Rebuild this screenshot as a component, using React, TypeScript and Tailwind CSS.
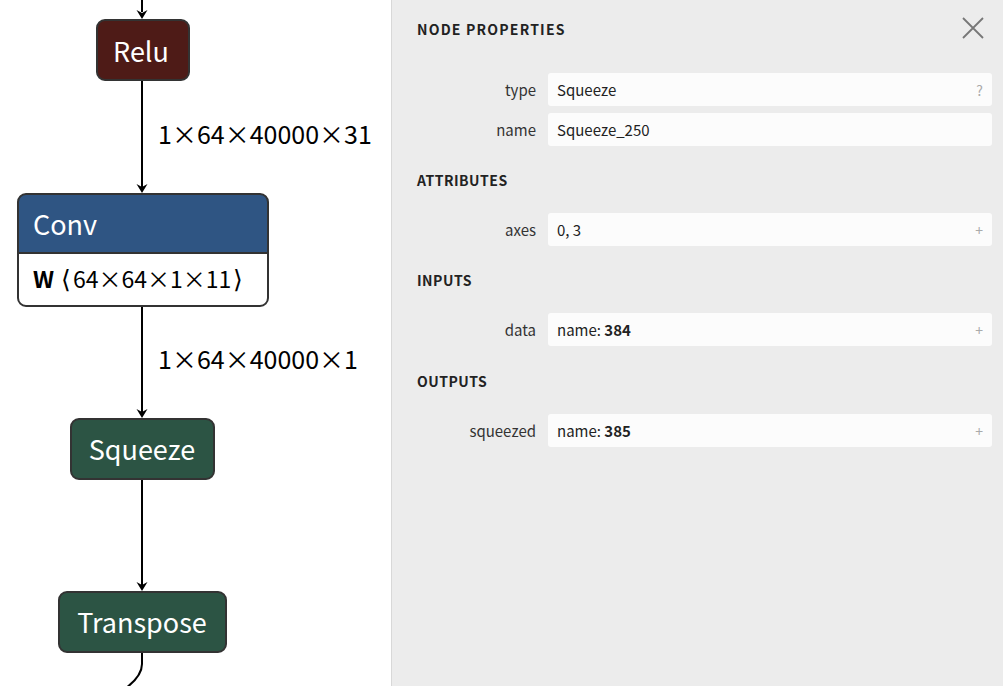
import React from 'react';

const FONT = '"Noto Sans CJK JP", "Open Sans", sans-serif';

const Arrow: React.FC<{ x: number; y: number }> = ({ x, y }) => (
  <path d={`M ${x} ${y} L ${x - 5.5} ${y - 9} L ${x} ${y - 6} L ${x + 5.5} ${y - 9} Z`} fill="#000" />
);

const Graph: React.FC = () => (
  <svg width="391" height="686" viewBox="0 0 391 686" className="block" style={{ fontFamily: FONT }}>
    {/* edges */}
    <g stroke="#000" strokeWidth="2" fill="none">
      <line x1="142" y1="-2" x2="142" y2="12" />
      <line x1="142" y1="80" x2="142" y2="187" />
      <line x1="142" y1="306" x2="142" y2="412" />
      <line x1="142" y1="479" x2="142" y2="585" />
      <path d="M 142 652 L 142 664 Q 142 676 126 688" />
    </g>
    <Arrow x={142} y={19} />
    <Arrow x={142} y={193} />
    <Arrow x={142} y={418} />
    <Arrow x={142} y={591} />

    <text x="158" y="144" fontSize="25" fill="#000">1×64×40000×31</text>
    <text x="158" y="369" fontSize="25" fill="#000">1×64×40000×1</text>

    {/* Relu */}
    <rect x="97" y="20" width="92" height="60" rx="8" fill="#4e1b17" stroke="#333" strokeWidth="2" />
    <text x="141" y="62" fontSize="27" fill="#fff" textAnchor="middle">Relu</text>

    {/* Conv */}
    <path d="M 18 253 L 18 202 Q 18 194 26 194 L 260 194 Q 268 194 268 202 L 268 253 Z" fill="#2f5583" />
    <path d="M 18 253 L 268 253 L 268 298 Q 268 306 260 306 L 26 306 Q 18 306 18 298 Z" fill="#fff" />
    <rect x="18" y="194" width="250" height="112" rx="8" fill="none" stroke="#333" strokeWidth="2" />
    <line x1="18" y1="253" x2="268" y2="253" stroke="#333" strokeWidth="2" />
    <text x="33" y="235" fontSize="27" fill="#fff">Conv</text>
    <text x="33" y="288" fontSize="23" fontWeight="700" fill="#000">W</text>
    <text x="61" y="288" fontSize="23" fill="#000">
      <tspan fontFamily='"DejaVu Sans", sans-serif' fontWeight="200" fontSize="25">⟨</tspan>
      <tspan dx="2">64×64×1×11</tspan>
      <tspan dx="2" fontFamily='"DejaVu Sans", sans-serif' fontWeight="200" fontSize="25">⟩</tspan>
    </text>

    {/* Squeeze */}
    <rect x="71" y="419" width="143" height="60" rx="8" fill="#2c5444" stroke="#333" strokeWidth="2" />
    <text x="142" y="460" fontSize="27" fill="#fff" textAnchor="middle">Squeeze</text>

    {/* Transpose */}
    <rect x="59" y="592" width="167" height="60" rx="8" fill="#2c5444" stroke="#333" strokeWidth="2" />
    <text x="142" y="633" fontSize="27" fill="#fff" textAnchor="middle">Transpose</text>
  </svg>
);

const Row: React.FC<{ label: string; icon: string; children: React.ReactNode }> = ({ label, icon, children }) => (
  <div className="grid grid-cols-[144px_1fr] gap-x-[12px] items-center">
    <div className="text-right text-[15px] text-[#333] leading-[20px]">{label}</div>
    <div className="h-[33px] bg-[#fcfcfc] rounded-[3px] flex items-center pl-[9px] pr-[9px] text-[15px] leading-[20px] text-[#222]">
      <div className="flex-1">{children}</div>
      <span className="text-[#aaa] text-[14px]">{icon}</span>
    </div>
  </div>
);

const SectionTitle: React.FC<{ title: string; className?: string }> = ({ title, className }) => (
  <div className={`pl-[25px] h-[20px] leading-[20px] text-[14px] font-bold text-[#222] ${className ?? ''}`}>
    {title}
  </div>
);

export default function App() {
  return (
    <div className="flex w-[1003px] h-[686px] overflow-hidden bg-white" style={{ fontFamily: FONT }}>
      <div className="relative w-[391px] h-full bg-white overflow-hidden">
        <Graph />
      </div>
      <div className="flex-1 h-full bg-[#ececec] border-l border-[#d8d8d8] pr-[11px]">
        <div className="flex items-center justify-between pt-[19px]">
          <SectionTitle title="NODE PROPERTIES" className="tracking-[1.2px]" />
          <svg width="22" height="22" viewBox="0 0 22 22" className="mr-[8px] -mt-[2px]">
            <path d="M 1 1 L 21 21 M 21 1 L 1 21" stroke="#777" strokeWidth="1.8" fill="none" />
          </svg>
        </div>
        <div className="mt-[34px] flex flex-col gap-[7px]">
          <Row label="type" icon="?">Squeeze</Row>
          <Row label="name" icon="">Squeeze_250</Row>
        </div>
        <SectionTitle title="ATTRIBUTES" className="mt-[24px] tracking-[0.5px]" />
        <div className="mt-[23px]">
          <Row label="axes" icon="+">0, 3</Row>
        </div>
        <SectionTitle title="INPUTS" className="mt-[24px] tracking-[0.5px]" />
        <div className="mt-[23px]">
          <Row label="data" icon="+">
            name: <span className="font-bold">384</span>
          </Row>
        </div>
        <SectionTitle title="OUTPUTS" className="mt-[25px] tracking-[0.5px]" />
        <div className="mt-[23px]">
          <Row label="squeezed" icon="+">
            name: <span className="font-bold">385</span>
          </Row>
        </div>
      </div>
    </div>
  );
}
